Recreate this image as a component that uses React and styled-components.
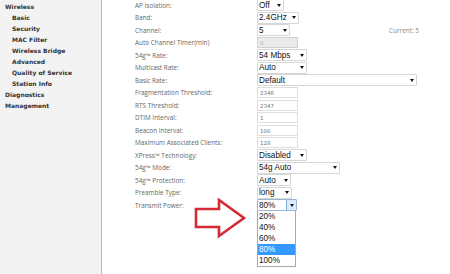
import React from 'react';
import styled, { createGlobalStyle } from 'styled-components';

const GlobalStyle = createGlobalStyle`
    html, body {
        margin: 0;
        padding: 0;
        background: #fff;
    }
    body {
        width: 450px;
        height: 274px;
        overflow: hidden;
    }
`;

const menu = [
    { name: 'Wireless', sub: false },
    { name: 'Basic', sub: true },
    { name: 'Security', sub: true },
    { name: 'MAC Filter', sub: true },
    { name: 'Wireless Bridge', sub: true },
    { name: 'Advanced', sub: true },
    { name: 'Quality of Service', sub: true },
    { name: 'Station Info', sub: true },
    { name: 'Diagnostics', sub: false },
    { name: 'Management', sub: false },
];

const rows = [
    { label: 'AP Isolation:', type: 'select', value: 'Off', width: 27 },
    { label: 'Band:', type: 'select', value: '2.4GHz', width: 42 },
    { label: 'Channel:', type: 'select', value: '5', width: 33, note: 'Current: 5' },
    { label: 'Auto Channel Timer(min)', type: 'input', value: '0', width: 41, disabled: true },
    { label: '54g\u2122 Rate:', type: 'select', value: '54 Mbps', width: 50 },
    { label: 'Multicast Rate:', type: 'select', value: 'Auto', width: 50 },
    { label: 'Basic Rate:', type: 'select', value: 'Default', width: 160 },
    { label: 'Fragmentation Threshold:', type: 'input', value: '2346', width: 41 },
    { label: 'RTS Threshold:', type: 'input', value: '2347', width: 41 },
    { label: 'DTIM Interval:', type: 'input', value: '1', width: 41 },
    { label: 'Beacon Interval:', type: 'input', value: '100', width: 41 },
    { label: 'Maximum Associated Clients:', type: 'input', value: '128', width: 41 },
    { label: 'XPress\u2122 Technology:', type: 'select', value: 'Disabled', width: 50 },
    { label: '54g\u2122 Mode:', type: 'select', value: '54g Auto', width: 83 },
    { label: '54g\u2122 Protection:', type: 'select', value: 'Auto', width: 34 },
    { label: 'Preamble Type:', type: 'select', value: 'long', width: 35 },
    { label: 'Transmit Power:', type: 'select', value: '80%', width: 40, open: true },
];

const powerOptions = ['20%', '40%', '60%', '80%', '100%'];

function App() {
    return (
        <>
            <GlobalStyle />
            <Page>
                <Sidebar>
                    {menu.map((item) => (
                        <MenuItem key={item.name} $sub={item.sub}>{item.name}</MenuItem>
                    ))}
                </Sidebar>
                <Content>
                    {rows.map((row) => (
                        <Row key={row.label}>
                            <Label>{row.label}</Label>
                            {row.type === 'select' ? (
                                <SelectWrap>
                                    <Select $width={row.width} $open={row.open}>
                                        <SelectText>{row.value}</SelectText>
                                        <ArrowBox $open={row.open}><Caret /></ArrowBox>
                                    </Select>
                                    {row.open && (
                                        <ListBox>
                                            {powerOptions.map((opt) => (
                                                <Option key={opt} $active={opt === row.value}>{opt}</Option>
                                            ))}
                                        </ListBox>
                                    )}
                                </SelectWrap>
                            ) : (
                                <TextBox $width={row.width} $disabled={row.disabled}>{row.value}</TextBox>
                            )}
                            {row.note && <Note>{row.note}</Note>}
                        </Row>
                    ))}
                    <Pointer viewBox="0 0 54 42" width="54" height="42">
                        <path
                            d="M2 11 H25 V2 L50 20 L25 38 V29 H2 Z"
                            fill="#fff"
                            stroke="#d42a33"
                            strokeWidth="2.6"
                            strokeLinejoin="miter"
                        />
                    </Pointer>
                </Content>
            </Page>
        </>
    );
}

const Page = styled.div`
    display: flex;
    width: 450px;
    height: 274px;
`;

const Sidebar = styled.div`
    width: 102px;
    flex-shrink: 0;
    background: #f3f3f3;
    border-right: 1px solid #d7a9b4;
    padding-top: 1px;
    box-sizing: border-box;
`;

const MenuItem = styled.div`
    height: 11px;
    line-height: 11px;
    padding-left: ${(p) => (p.$sub ? '12px' : '5px')};
    font-family: "DejaVu Sans", Verdana, sans-serif;
    font-weight: bold;
    font-size: 6px;
    color: #333;
    white-space: nowrap;
`;

const Content = styled.div`
    position: relative;
    flex: 1;
    padding-left: 33px;
    margin-top: -1px;
`;

const Row = styled.div`
    display: flex;
    align-items: center;
    height: 12.5px;
`;

const Label = styled.div`
    width: 122px;
    flex-shrink: 0;
    font-family: "Open Sans", Tahoma, sans-serif;
    font-size: 6.4px;
    color: #666;
    white-space: nowrap;
`;

const SelectWrap = styled.div`
    position: relative;
`;

const Select = styled.div`
    display: flex;
    align-items: center;
    justify-content: space-between;
    width: ${(p) => p.$width}px;
    height: 12px;
    box-sizing: border-box;
    background: #fff;
    border: 1px solid ${(p) => (p.$open ? '#9bb4cf' : '#d6d6d6')};
    border-radius: 1px;
`;

const SelectText = styled.span`
    padding-left: 1px;
    font-family: "Liberation Sans", Arial, sans-serif;
    font-size: 8.2px;
    color: #111;
    white-space: nowrap;
`;

const ArrowBox = styled.span`
    display: flex;
    align-items: center;
    justify-content: center;
    width: 10px;
    height: 100%;
    box-sizing: border-box;
    background: ${(p) => (p.$open ? '#d9ecfb' : 'transparent')};
    border-left: 1px solid ${(p) => (p.$open ? '#7fb3e2' : 'transparent')};
`;

const Caret = styled.span`
    width: 0;
    height: 0;
    border-left: 2.5px solid transparent;
    border-right: 2.5px solid transparent;
    border-top: 3px solid #111;
`;

const ListBox = styled.div`
    position: absolute;
    top: 12px;
    left: 0;
    width: 39px;
    background: #fff;
    border: 1px solid #a8a8a8;
    border-top: none;
    box-sizing: border-box;
    z-index: 2;
`;

const Option = styled.div`
    height: 11px;
    line-height: 11px;
    padding-left: 1px;
    font-family: "Liberation Sans", Arial, sans-serif;
    font-size: 8.2px;
    color: ${(p) => (p.$active ? '#fff' : '#111')};
    background: ${(p) => (p.$active ? '#3399ff' : '#fff')};
`;

const TextBox = styled.div`
    width: ${(p) => p.$width}px;
    height: 11px;
    line-height: 10px;
    box-sizing: border-box;
    padding-left: 2px;
    border: 1px solid ${(p) => (p.$disabled ? '#d0d0d0' : '#dedede')};
    background: ${(p) => (p.$disabled ? '#ebebeb' : '#fff')};
    font-family: "DejaVu Sans", Verdana, sans-serif;
    font-size: 5.5px;
    color: ${(p) => (p.$disabled ? '#aaa' : '#777')};
`;

const Note = styled.span`
    margin-left: 99px;
    font-family: "Open Sans", Tahoma, sans-serif;
    font-size: 6.4px;
    color: #888;
    white-space: nowrap;
`;

const Pointer = styled.svg`
    position: absolute;
    left: 92px;
    top: 199px;
`;

export default App;
